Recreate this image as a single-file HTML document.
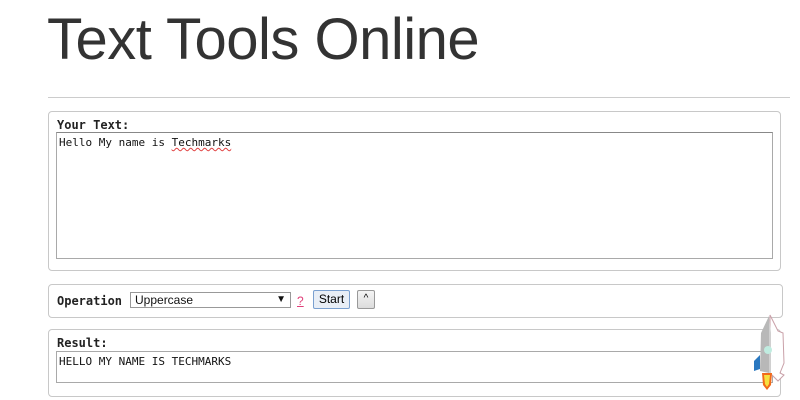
<!DOCTYPE html>
<html><head><style>
body{margin:0;width:800px;height:400px;overflow:hidden;background:#fff;font-family:"Liberation Sans",sans-serif;position:relative}
h1{position:absolute;left:47px;top:6px;margin:0;font-weight:normal;font-size:58px;color:#333;letter-spacing:-0.5px}
.hr{position:absolute;left:48px;top:97px;width:742px;height:1px;background:#ccc}
.box{position:absolute;left:48px;width:733px;border:1px solid #c8c8c8;border-radius:4px;box-sizing:border-box}
.lbl{position:absolute;left:8px;font:bold 12px "DejaVu Sans Mono","Liberation Mono",monospace;color:#222}
.ta{position:absolute;left:7px;right:7px;border:1px solid #a9a9a9;font:11px "DejaVu Sans Mono","Liberation Mono",monospace;color:#111;padding:3px 2px;box-sizing:border-box}
.sel{position:absolute;left:81px;top:7px;width:161px;height:16px;border:1px solid #999;box-sizing:border-box;font-size:12px;padding-left:4px;line-height:14px;color:#111}
.btn{position:absolute;top:5px;height:19px;box-sizing:border-box;border:1px solid #999;background:linear-gradient(#f4f4f4,#dcdcdc);font-size:12px;line-height:16px;text-align:center;border-radius:2px}
</style></head><body>
<h1>Text Tools Online</h1>
<div class="hr"></div>
<div class="box" style="top:111px;height:160px">
<div class="lbl" style="top:6px">Your Text:</div>
<div class="ta" style="top:20px;height:127px;border-top-color:#888">Hello My name is <span style="text-decoration:underline wavy #e04040;text-decoration-thickness:1px">Techmarks</span></div>
</div>
<div class="box" style="top:284px;height:34px;width:735px">
<div class="lbl" style="top:9px">Operation</div>
<div class="sel">Uppercase<span style="position:absolute;right:4px;font-size:10px">▼</span></div>
<span style="position:absolute;left:248px;top:9px;font-size:12px;color:#e0407a;text-decoration:underline">?</span>
<div class="btn" style="left:264px;width:37px;border-color:#7aa0d0;background:#e8eef6">Start</div>
<div class="btn" style="left:308px;width:18px;font-size:10px">^</div>
</div>
<div class="box" style="top:329px;height:68px">
<div class="lbl" style="top:6px">Result:</div>
<div class="ta" style="top:21px;height:32px">HELLO MY NAME IS TECHMARKS</div>
</div>
<svg style="position:absolute;left:750px;top:313px" width="40" height="80" viewBox="0 0 40 80">
<path d="M20 2 L28 18 L33 20 L34 50 L30 60 L34 62 L28 68 L20 60 Z" fill="#fff" stroke="#c9a0a8" stroke-width="1"/>
<path d="M19 3 L11 20 L10 58 L19 60 Z" fill="#b8b8b8"/>
<path d="M19 3 L21 20 L21 60 L19 60 Z" fill="#d0d0d0"/>
<circle cx="18" cy="37" r="4" fill="#c0ece0"/>
<path d="M10 42 L4 48 L4 58 L10 56 Z" fill="#2a78c0"/>
<path d="M12 60 L22 60 L21 72 L17 77 L13 72 Z" fill="#f26a1a"/>
<path d="M14 62 L20 62 L19 71 L17 74 L15 71 Z" fill="#f6e040"/>
</svg>
</body></html>
